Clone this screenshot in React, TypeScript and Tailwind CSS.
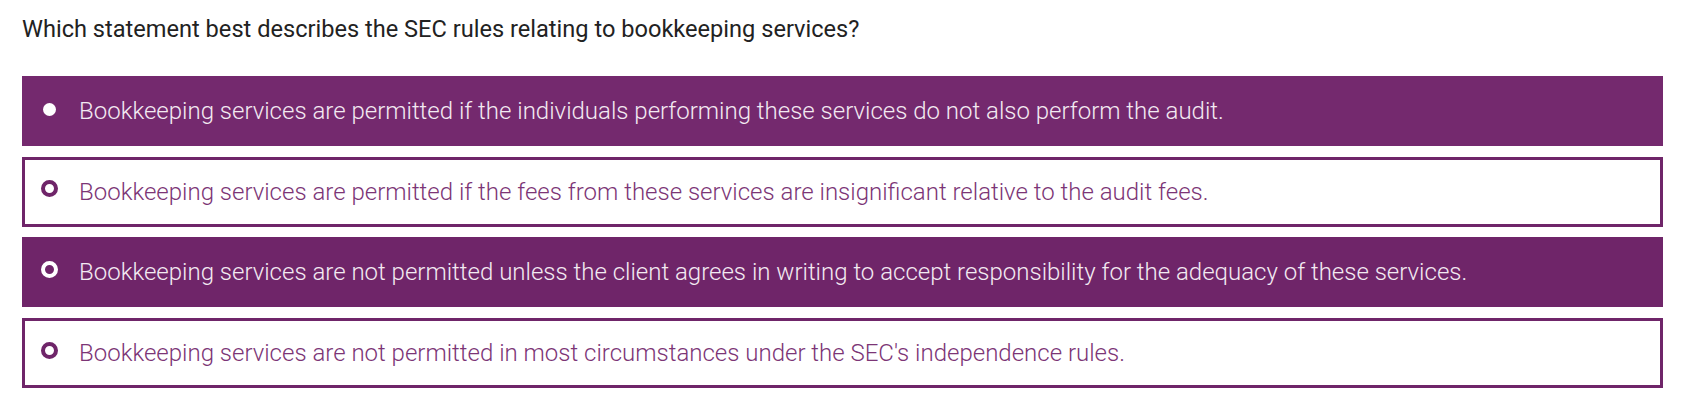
import React from "react";

type Opt = { text: string; state: "dot" | "ring" | "none"; filled: boolean };

const options: Opt[] = [
  {
    text: "Bookkeeping services are permitted if the individuals performing these services do not also perform the audit.",
    state: "dot",
    filled: true,
  },
  {
    text: "Bookkeeping services are permitted if the fees from these services are insignificant relative to the audit fees.",
    state: "none",
    filled: false,
  },
  {
    text: "Bookkeeping services are not permitted unless the client agrees in writing to accept responsibility for the adequacy of these services.",
    state: "ring",
    filled: true,
  },
  {
    text: "Bookkeeping services are not permitted in most circumstances under the SEC's independence rules.",
    state: "none",
    filled: false,
  },
];

function Radio({ state }: { state: Opt["state"] }) {
  if (state === "dot") {
    return (
      <span className="-mt-[4px] flex h-[17px] w-[17px] shrink-0 items-center justify-center">
        <span className="block h-[13px] w-[13px] rounded-full bg-white" />
      </span>
    );
  }
  if (state === "ring") {
    return <span className="-mt-[6px] block h-[17px] w-[17px] shrink-0 rounded-full border-[4px] border-white" />;
  }
  return <span className="-mt-[6px] block h-[17px] w-[17px] shrink-0 rounded-full border-[4px] border-[#6f2569]" />;
}

export default function App() {
  return (
    <div
      className="min-h-[406px] w-[1700px] bg-white pl-[22px] pr-[37px] pt-[15px]"
      style={{ fontFamily: "Roboto, 'Liberation Sans', sans-serif" }}
    >
      <p className="text-[23.6px] font-normal leading-[28px] text-[#222222]">
        Which statement best describes the SEC rules relating to bookkeeping services?
      </p>
      <div className="mt-[33px] flex flex-col gap-[10.7px]">
        {options.map((o, i) => (
          <div
            key={i}
            className={
              o.filled
                ? `flex h-[70px] items-center gap-[21px] pl-[19px] ${i === 0 ? "bg-[#74296e]" : "bg-[#6f2569]"} text-[#f3eaf2]`
                : "flex h-[70px] items-center gap-[21px] border-[3px] border-[#6f2569] bg-white pl-[16px] text-[#7c3576]"
            }
          >
            <Radio state={o.state} />
            <span className="whitespace-nowrap text-[24px] font-light leading-[28px]">{o.text}</span>
          </div>
        ))}
      </div>
    </div>
  );
}
